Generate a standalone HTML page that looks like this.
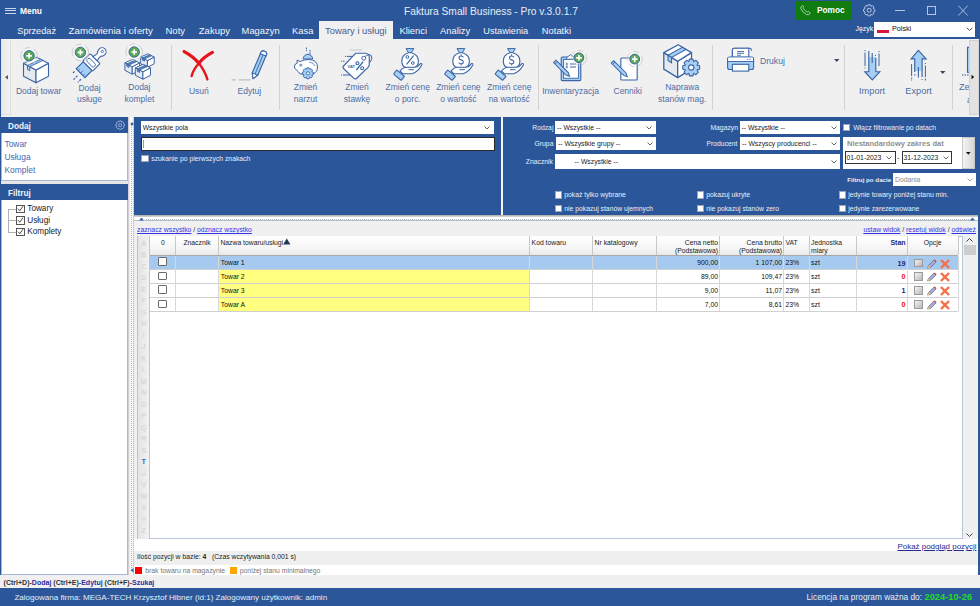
<!DOCTYPE html><html><head><meta charset="utf-8"><style>
*{margin:0;padding:0;box-sizing:border-box}
html,body{width:980px;height:606px;overflow:hidden;background:#2B579A;font-family:"Liberation Sans",sans-serif}
.t{position:absolute;white-space:pre;line-height:1}
.r{position:absolute}
u{text-decoration:underline}
</style></head><body>

<div class="r" style="left:5px;top:7.5px;width:11px;height:1px;background:#C9D5E8;"></div>
<div class="r" style="left:5px;top:10px;width:11px;height:1px;background:#C9D5E8;"></div>
<div class="r" style="left:5px;top:12.5px;width:11px;height:1px;background:#C9D5E8;"></div>
<div class="t " style="left:20px;top:7.00px;font-size:8.4px;color:#fff;font-weight:bold;">Menu</div>
<div class="t " style="left:404px;top:7.00px;font-size:10.24px;color:#E6ECF5;">Faktura Small Business - Pro v.3.0.1.7</div>
<div class="r" style="left:796px;top:1px;width:56px;height:19px;background:#107C10;"></div>
<div class="t " style="left:817px;top:6.00px;font-size:8.3px;color:#fff;font-weight:bold;">Pomoc</div>
<div class="r" style="left:895px;top:10px;width:9.5px;height:1px;background:#B9C7DE;"></div>
<div class="r" style="left:927.3px;top:6.1px;width:9px;height:8.6px;border:1px solid #B9C7DE;"></div>
<div class="r" style="left:319px;top:21px;width:74px;height:18px;background:#F0F0F0;"></div>
<div class="t " style="left:17.3px;top:27.00px;font-size:9.16px;color:#F2F5FA;">Sprzedaż</div>
<div class="t " style="left:68.6px;top:26.00px;font-size:9.72px;color:#F2F5FA;">Zamówienia i oferty</div>
<div class="t " style="left:165.5px;top:26.00px;font-size:9.5px;color:#F2F5FA;">Noty</div>
<div class="t " style="left:198.8px;top:26.00px;font-size:9.5px;color:#F2F5FA;">Zakupy</div>
<div class="t " style="left:241.6px;top:26.00px;font-size:9.4px;color:#F2F5FA;">Magazyn</div>
<div class="t " style="left:292px;top:26.00px;font-size:9.4px;color:#F2F5FA;">Kasa</div>
<div class="t " style="left:399.4px;top:26.00px;font-size:9.4px;color:#F2F5FA;">Klienci</div>
<div class="t " style="left:440px;top:26.00px;font-size:9.4px;color:#F2F5FA;">Analizy</div>
<div class="t " style="left:483.3px;top:27.00px;font-size:9.18px;color:#F2F5FA;">Ustawienia</div>
<div class="t " style="left:541.8px;top:26.00px;font-size:9.4px;color:#F2F5FA;">Notatki</div>
<div class="t " style="left:325px;top:26.00px;font-size:9.42px;color:#44608F;">Towary i usługi</div>
<div class="t " style="left:855.5px;top:26.00px;font-size:6.9px;color:#fff;">Język</div>
<div class="r" style="left:874px;top:22px;width:101px;height:14.5px;background:#fff;"></div>
<div class="r" style="left:877px;top:29.5px;width:12px;height:3.2px;background:#DC143C;"></div>
<div class="t " style="left:892px;top:25.00px;font-size:7.2px;color:#111;">Polski</div>
<div class="r" style="left:1px;top:39px;width:978px;height:78px;background:#F0F0F0;"></div>
<div class="r" style="left:1px;top:40px;width:10px;height:75px;background:linear-gradient(90deg,#E8E8E8,#F2F2F2);border-right:1px solid #DCDCDC;border-bottom:1px solid #E0E0E0;"></div>
<div class="r" style="left:969px;top:40px;width:9px;height:75px;background:#DCDCDC;border:1px solid #CFCFCF;"></div>
<div class="r" style="left:170.5px;top:45px;width:1px;height:65px;background:#D2D2D2;"></div>
<div class="r" style="left:278.5px;top:45px;width:1px;height:65px;background:#D2D2D2;"></div>
<div class="r" style="left:538.3px;top:45px;width:1px;height:65px;background:#D2D2D2;"></div>
<div class="r" style="left:711.7px;top:45px;width:1px;height:65px;background:#D2D2D2;"></div>
<div class="r" style="left:844.4px;top:45px;width:1px;height:65px;background:#D2D2D2;"></div>
<div class="r" style="left:951.5px;top:45px;width:1px;height:65px;background:#D2D2D2;"></div>
<div class="t " style="left:38.6px;top:87.00px;font-size:8.5px;color:#4D6DA3;width:120px;margin-left:-60.0px;text-align:center;">Dodaj towar</div>
<div class="t " style="left:89.5px;top:84.00px;font-size:8.5px;color:#4D6DA3;width:120px;margin-left:-60.0px;text-align:center;">Dodaj</div>
<div class="t " style="left:89.5px;top:95.00px;font-size:8.5px;color:#4D6DA3;width:120px;margin-left:-60.0px;text-align:center;">usługe</div>
<div class="t " style="left:139.4px;top:83.00px;font-size:8.5px;color:#4D6DA3;width:120px;margin-left:-60.0px;text-align:center;">Dodaj</div>
<div class="t " style="left:139.4px;top:95.00px;font-size:8.5px;color:#4D6DA3;width:120px;margin-left:-60.0px;text-align:center;">komplet</div>
<div class="t " style="left:198.8px;top:87.00px;font-size:8.5px;color:#4D6DA3;width:120px;margin-left:-60.0px;text-align:center;">Usuń</div>
<div class="t " style="left:249.4px;top:87.00px;font-size:8.5px;color:#4D6DA3;width:120px;margin-left:-60.0px;text-align:center;">Edytuj</div>
<div class="t " style="left:305.5px;top:83.00px;font-size:8.5px;color:#4D6DA3;width:120px;margin-left:-60.0px;text-align:center;">Zmień</div>
<div class="t " style="left:305.5px;top:95.00px;font-size:8.5px;color:#4D6DA3;width:120px;margin-left:-60.0px;text-align:center;">narzut</div>
<div class="t " style="left:357px;top:83.00px;font-size:8.5px;color:#4D6DA3;width:120px;margin-left:-60.0px;text-align:center;">Zmień</div>
<div class="t " style="left:357px;top:95.00px;font-size:8.5px;color:#4D6DA3;width:120px;margin-left:-60.0px;text-align:center;">stawkę</div>
<div class="t " style="left:407.8px;top:83.00px;font-size:8.5px;color:#4D6DA3;width:120px;margin-left:-60.0px;text-align:center;">Zmień cenę</div>
<div class="t " style="left:407.8px;top:95.00px;font-size:8.5px;color:#4D6DA3;width:120px;margin-left:-60.0px;text-align:center;">o porc.</div>
<div class="t " style="left:458.4px;top:83.00px;font-size:8.5px;color:#4D6DA3;width:120px;margin-left:-60.0px;text-align:center;">Zmień cenę</div>
<div class="t " style="left:458.4px;top:95.00px;font-size:8.5px;color:#4D6DA3;width:120px;margin-left:-60.0px;text-align:center;">o wartość</div>
<div class="t " style="left:509.2px;top:83.00px;font-size:8.5px;color:#4D6DA3;width:120px;margin-left:-60.0px;text-align:center;">Zmień cenę</div>
<div class="t " style="left:509.2px;top:95.00px;font-size:8.5px;color:#4D6DA3;width:120px;margin-left:-60.0px;text-align:center;">na wartość</div>
<div class="t " style="left:570.6px;top:87.00px;font-size:8.5px;color:#4D6DA3;width:120px;margin-left:-60.0px;text-align:center;">Inwentaryzacja</div>
<div class="t " style="left:627.7px;top:87.00px;font-size:8.5px;color:#4D6DA3;width:120px;margin-left:-60.0px;text-align:center;">Cenniki</div>
<div class="t " style="left:682.2px;top:83.00px;font-size:8.5px;color:#4D6DA3;width:120px;margin-left:-60.0px;text-align:center;">Naprawa</div>
<div class="t " style="left:682.2px;top:95.00px;font-size:8.5px;color:#4D6DA3;width:120px;margin-left:-60.0px;text-align:center;">stanów mag.</div>
<div class="t " style="left:760px;top:57.00px;font-size:8.6px;color:#4D6DA3;">Drukuj</div>
<svg class="r" style="left:0;top:0" width="980" height="120"><polygon points="23.5,63.344 36.0,70.0 36.0,82.8 23.5,76.144" fill="#E6E9EE" stroke="#3A64A6" stroke-width="1.1" stroke-linejoin="round"/><polygon points="36.0,70.0 48.5,63.344 48.5,76.144 36.0,82.8" fill="#FFFFFF" stroke="#3A64A6" stroke-width="1.1" stroke-linejoin="round"/><polygon points="23.5,63.344 36.5,57.2 48.5,63.344 36.0,70.0" fill="#FFFFFF" stroke="#3A64A6" stroke-width="1.1" stroke-linejoin="round"/><polygon points="27.5,65.47392 29.75,66.672 42.75,60.528 40.5,59.32992000000001" fill="#A6CFF4" stroke="#3A64A6" stroke-width="0.8800000000000001"/><polygon points="27.5,65.47392 29.75,66.672 29.75,70.768 27.5,69.56992000000001" fill="#A6CFF4" stroke="#3A64A6" stroke-width="0.8800000000000001"/><circle cx="29.1" cy="55.8" r="8.3" fill="none" stroke="#CBCBCB" stroke-width="0.9" stroke-dasharray="9 3 6 4"/><circle cx="29.1" cy="55.8" r="6.700000000000001" fill="rgba(255,255,255,0.55)"/><circle cx="29.1" cy="55.8" r="5.2" fill="#5AA95A" stroke="#2F5E8E" stroke-width="0.9"/><path d="M26.3 55.8H31.900000000000002M29.1 53.0V58.599999999999994" stroke="#fff" stroke-width="1.7"/><g transform="translate(91.2 62.6) rotate(-45)"><path d="M-18 -5.5H-21.5M-19 -0.5H-25M-19 4.5H-23.5" stroke="#3A64A6" stroke-width="1.2" stroke-dasharray="2.2 1.2"/><rect x="-15" y="-6.2" width="10" height="12.4" fill="#A6CFF4" stroke="#3A64A6" stroke-width="1.15"/><path d="M-15 -3.5H-12.5M-15 0H-11.5M-15 3.5H-12.5" stroke="#3A64A6" stroke-width="0.8"/><rect x="-5" y="-7" width="10.5" height="14" rx="1" fill="#FFFFFF" stroke="#3A64A6" stroke-width="1.15"/><rect x="-2.2" y="-5" width="4.2" height="10" rx="1.6" fill="none" stroke="#3A64A6" stroke-width="0.9"/><path d="M5.5 -3 Q9 -2 11 -2.2 Q13 -4 15.4 -4 A4 4 0 1 1 15.4 4 Q13 4 11 2.2 Q9 2 5.5 3Z" fill="#FFFFFF" stroke="#3A64A6" stroke-width="1.1"/><circle cx="15.8" cy="0" r="1.2" fill="none" stroke="#3A64A6" stroke-width="0.9"/></g><circle cx="80.4" cy="52.4" r="8.3" fill="none" stroke="#CBCBCB" stroke-width="0.9" stroke-dasharray="9 3 6 4"/><circle cx="80.4" cy="52.4" r="6.700000000000001" fill="rgba(255,255,255,0.55)"/><circle cx="80.4" cy="52.4" r="5.2" fill="#5AA95A" stroke="#2F5E8E" stroke-width="0.9"/><path d="M77.60000000000001 52.4H83.2M80.4 49.6V55.199999999999996" stroke="#fff" stroke-width="1.7"/><polygon points="140.7,57.04 147.45,60.55 147.45,67.3 140.7,63.79" fill="#E6E9EE" stroke="#3A64A6" stroke-width="1.0" stroke-linejoin="round"/><polygon points="147.45,60.55 154.2,57.04 154.2,63.79 147.45,67.3" fill="#FFFFFF" stroke="#3A64A6" stroke-width="1.0" stroke-linejoin="round"/><polygon points="140.7,57.04 147.72,53.8 154.2,57.04 147.45,60.55" fill="#FFFFFF" stroke="#3A64A6" stroke-width="1.0" stroke-linejoin="round"/><polygon points="142.45499999999998,57.9526 144.48,59.0056 151.5,55.7656 149.475,54.712599999999995" fill="#5A80BC" stroke="#3A64A6" stroke-width="0.8"/><polygon points="142.45499999999998,57.9526 144.48,59.0056 144.48,61.1656 142.45499999999998,60.1126" fill="#5A80BC" stroke="#3A64A6" stroke-width="0.8"/><polygon points="124.9,62.876 132.25,66.75 132.25,74.2 124.9,70.326" fill="#E6E9EE" stroke="#3A64A6" stroke-width="1.0" stroke-linejoin="round"/><polygon points="132.25,66.75 139.6,62.876 139.6,70.326 132.25,74.2" fill="#FFFFFF" stroke="#3A64A6" stroke-width="1.0" stroke-linejoin="round"/><polygon points="124.9,62.876 132.544,59.3 139.6,62.876 132.25,66.75" fill="#FFFFFF" stroke="#3A64A6" stroke-width="1.0" stroke-linejoin="round"/><polygon points="126.811,63.88324 129.016,65.04544 136.66,61.46944 134.455,60.30724" fill="#5A80BC" stroke="#3A64A6" stroke-width="0.8"/><polygon points="126.811,63.88324 129.016,65.04544 129.016,67.42944 126.811,66.26724" fill="#5A80BC" stroke="#3A64A6" stroke-width="0.8"/><polygon points="135.3,67.876 142.9,71.75 142.9,79.2 135.3,75.326" fill="#E6E9EE" stroke="#3A64A6" stroke-width="1.0" stroke-linejoin="round"/><polygon points="142.9,71.75 150.5,67.876 150.5,75.326 142.9,79.2" fill="#FFFFFF" stroke="#3A64A6" stroke-width="1.0" stroke-linejoin="round"/><polygon points="135.3,67.876 143.204,64.3 150.5,67.876 142.9,71.75" fill="#FFFFFF" stroke="#3A64A6" stroke-width="1.0" stroke-linejoin="round"/><polygon points="137.276,68.88324 139.556,70.04544 147.46,66.46943999999999 145.18,65.30724" fill="#5A80BC" stroke="#3A64A6" stroke-width="0.8"/><polygon points="137.276,68.88324 139.556,70.04544 139.556,72.42944 137.276,71.26724" fill="#5A80BC" stroke="#3A64A6" stroke-width="0.8"/><circle cx="134.2" cy="52.0" r="8.3" fill="none" stroke="#CBCBCB" stroke-width="0.9" stroke-dasharray="9 3 6 4"/><circle cx="134.2" cy="52.0" r="6.700000000000001" fill="rgba(255,255,255,0.55)"/><circle cx="134.2" cy="52.0" r="5.2" fill="#5AA95A" stroke="#2F5E8E" stroke-width="0.9"/><path d="M131.39999999999998 52.0H137.0M134.2 49.2V54.8" stroke="#fff" stroke-width="1.7"/><path d="M184.2 51.6 Q193.5 56.5 199 63.5" fill="none" stroke="#E8141C" stroke-width="3.3" stroke-linecap="round"/><path d="M198.6 63 Q204.8 70.5 207.4 79.4" fill="none" stroke="#E8141C" stroke-width="2.4" stroke-linecap="round"/><path d="M212.4 52.4 Q204 56.8 198.8 63.2" fill="none" stroke="#E8141C" stroke-width="3.3" stroke-linecap="round"/><path d="M199.2 63 Q193.2 69.5 191.6 76" fill="none" stroke="#E8141C" stroke-width="2.4" stroke-linecap="round"/><path d="M231.5 79.9H235.8M238.8 79.9H250.8" stroke="#B9C0C8" stroke-width="1.1"/><g transform="translate(258.7 65.3) rotate(23)"><path d="M-3 -13 Q-3 -15.2 0 -15.2 Q3 -15.2 3 -13 V9.5 L0 14.5 L-3 9.5Z" fill="#A6CFF4" stroke="#3A64A6" stroke-width="1.15" stroke-linejoin="round"/><path d="M-3 -13 Q-3 -15.2 0 -15.2 Q3 -15.2 3 -13 V-11.3 H-3Z" fill="#fff" stroke="#3A64A6" stroke-width="1.0"/><path d="M0 -11 V9" stroke="#3A64A6" stroke-width="0.9"/><path d="M-3 9.5 L0 14.5 L3 9.5Z" fill="#fff" stroke="#3A64A6" stroke-width="1.0" stroke-linejoin="round"/></g><path d="M306.4 47.5V51M310 50V56" stroke="#3A64A6" stroke-width="1" stroke-dasharray="1.6 0.8"/><path d="M303.2 59 A4.7 4.7 0 0 1 312.6 59Z" fill="#A6CFF4" stroke="#3A64A6" stroke-width="1"/><path d="M297 60 L300 61.5 Q304 59.5 309 59.5 Q317.5 60 317.5 67 Q317.5 72 313 74 L300 74 Q298 71 296 69.5 Q294.3 69 294.5 66 Q295 63.5 297.3 63 Z" fill="#fff" stroke="#3A64A6" stroke-width="1"/><ellipse cx="300.8" cy="65.2" rx="1.2" ry="0.9" fill="none" stroke="#3A64A6" stroke-width="0.8"/><path d="M309 62 Q314 62.5 315 66" fill="none" stroke="#3A64A6" stroke-width="0.7"/><polygon points="311.75,71.76 313.38,72.15 313.38,74.45 311.75,74.84 311.71,74.93 312.59,76.36 310.96,77.99 309.53,77.11 309.44,77.15 309.05,78.78 306.75,78.78 306.36,77.15 306.27,77.11 304.84,77.99 303.21,76.36 304.09,74.93 304.05,74.84 302.42,74.45 302.42,72.15 304.05,71.76 304.09,71.67 303.21,70.24 304.84,68.61 306.27,69.49 306.36,69.45 306.75,67.82 309.05,67.82 309.44,69.45 309.53,69.49 310.96,68.61 312.59,70.24 311.71,71.67" fill="#A6CFF4" stroke="#3A64A6" stroke-width="0.9" stroke-linejoin="round"/><circle cx="307.9" cy="73.3" r="1.6" fill="#fff" stroke="#3A64A6" stroke-width="0.9"/><path d="M349.5 50H362" stroke="#C0C6CE" stroke-width="0.9"/><path d="M345 56.4H356M341 61.2H344.5M341 75H353.5" stroke="#3A64A6" stroke-width="1" stroke-dasharray="1.2 0.8 20 0"/><path d="M355.8 53.2 H365.5 Q369.3 53.5 369.3 57.5 V64.5 Q369.3 66 368 67.3 L356.5 78.5 Q355 79.5 353.6 78.2 L343.5 68.5 Q342.3 67.2 343.5 66 Z" fill="#fff" stroke="#3A64A6" stroke-width="1.15" stroke-linejoin="round"/><circle cx="363.8" cy="58.2" r="2" fill="none" stroke="#3A64A6" stroke-width="1"/><path d="M365.5 56.2 Q369 53 371.2 55.5 Q373 58.5 370.3 62" fill="none" stroke="#3A64A6" stroke-width="1"/><text x="347.6" y="67.7" font-family="Liberation Sans" font-weight="bold" font-size="4.0" fill="#3A64A6">VAT</text><path d="M363.2 61.6 L356.4 70" stroke="#3A64A6" stroke-width="1.3"/><circle cx="357.4" cy="63.3" r="1.5" fill="none" stroke="#3A64A6" stroke-width="1.1"/><circle cx="362.2" cy="68.3" r="1.5" fill="none" stroke="#3A64A6" stroke-width="1.1"/><path d="M406 48.6 H413.8 L411.2 52.8 H408.6Z" fill="#A6CFF4" stroke="#3A64A6" stroke-width="1" stroke-linejoin="round"/><path d="M408.4 52.8 Q401.8 55 401.8 61 Q401.8 66.5 406 67.5 H414.2 Q418.4 66.5 418.4 61 Q418.4 55 411.4 52.8Z" fill="#fff" stroke="#3A64A6" stroke-width="1.1"/><path d="M413.6 55.6 L406.6 64.4" stroke="#3A64A6" stroke-width="1.2"/><circle cx="407.4" cy="57" r="1.4" fill="none" stroke="#3A64A6" stroke-width="1"/><circle cx="412.8" cy="63" r="1.4" fill="none" stroke="#3A64A6" stroke-width="1"/><path d="M400 71 Q403 67.3 407 67.3 H415 Q418 67 420.5 63.6 Q422.5 63.2 421.8 65 Q418 72 412 73.8 H403Z" fill="#fff" stroke="#3A64A6" stroke-width="1.1" stroke-linejoin="round"/><path d="M408.5 69.7 H414" stroke="#3A64A6" stroke-width="1"/><g transform="translate(399 75.2) rotate(40)"><rect x="-5" y="-2.6" width="10" height="5.2" rx="0.6" fill="#A6CFF4" stroke="#3A64A6" stroke-width="1.1"/></g><path d="M457 48.6 H464.8 L462.2 52.8 H459.6Z" fill="#A6CFF4" stroke="#3A64A6" stroke-width="1" stroke-linejoin="round"/><path d="M459.4 52.8 Q452.8 55 452.8 61 Q452.8 66.5 457 67.5 H465.2 Q469.4 66.5 469.4 61 Q469.4 55 462.4 52.8Z" fill="#fff" stroke="#3A64A6" stroke-width="1.1"/><path d="M463.4 57.3 Q462.8 56 461.1 56 Q459 56 459 57.8 Q459 59.4 461.1 59.9 Q463.3 60.4 463.3 62.1 Q463.3 63.9 461.1 63.9 Q459.3 63.9 458.8 62.6 M461.1 54.6 V56 M461.1 63.9 V65.3" fill="none" stroke="#3A64A6" stroke-width="1.1"/><path d="M451 71 Q454 67.3 458 67.3 H466 Q469 67 471.5 63.6 Q473.5 63.2 472.8 65 Q469 72 463 73.8 H454Z" fill="#fff" stroke="#3A64A6" stroke-width="1.1" stroke-linejoin="round"/><path d="M459.5 69.7 H465" stroke="#3A64A6" stroke-width="1"/><g transform="translate(450 75.2) rotate(40)"><rect x="-5" y="-2.6" width="10" height="5.2" rx="0.6" fill="#A6CFF4" stroke="#3A64A6" stroke-width="1.1"/></g><path d="M507.5 48.6 H515.3 L512.7 52.8 H510.1Z" fill="#A6CFF4" stroke="#3A64A6" stroke-width="1" stroke-linejoin="round"/><path d="M509.9 52.8 Q503.3 55 503.3 61 Q503.3 66.5 507.5 67.5 H515.7 Q519.9 66.5 519.9 61 Q519.9 55 512.9 52.8Z" fill="#fff" stroke="#3A64A6" stroke-width="1.1"/><path d="M513.9 57.3 Q513.3 56 511.6 56 Q509.5 56 509.5 57.8 Q509.5 59.4 511.6 59.9 Q513.8 60.4 513.8 62.1 Q513.8 63.9 511.6 63.9 Q509.8 63.9 509.3 62.6 M511.6 54.6 V56 M511.6 63.9 V65.3" fill="none" stroke="#3A64A6" stroke-width="1.1"/><path d="M501.5 71 Q504.5 67.3 508.5 67.3 H516.5 Q519.5 67 522.0 63.6 Q524.0 63.2 523.3 65 Q519.5 72 513.5 73.8 H504.5Z" fill="#fff" stroke="#3A64A6" stroke-width="1.1" stroke-linejoin="round"/><path d="M510.0 69.7 H515.5" stroke="#3A64A6" stroke-width="1"/><g transform="translate(500.5 75.2) rotate(40)"><rect x="-5" y="-2.6" width="10" height="5.2" rx="0.6" fill="#A6CFF4" stroke="#3A64A6" stroke-width="1.1"/></g><rect x="561.2" y="57" width="19.6" height="23.6" rx="1.2" fill="#A6CFF4" stroke="#3A64A6" stroke-width="1.1"/><rect x="563.6" y="59.4" width="14.8" height="18.8" fill="#fff" stroke="#3A64A6" stroke-width="0.9"/><path d="M566 59.2 Q567 56.2 569 56 Q570 53.6 571.8 55.6 Q574 56 575 59.2Z" fill="#fff" stroke="#3A64A6" stroke-width="0.9"/><path d="M570 64H576M570 67H576" stroke="#3A64A6" stroke-width="1.1"/><path d="M566.8 62.5V68.5M565.6 64H568M565.6 67H568" stroke="#3A64A6" stroke-width="0.7"/><g transform="translate(562.5 69.2) rotate(45)"><path d="M-11 -1.7 H6.5 L10 0 L6.5 1.7 H-11Z" fill="#A6CFF4" stroke="#3A64A6" stroke-width="1"/><path d="M-9 -1.7V1.7" stroke="#3A64A6" stroke-width="0.8"/></g><circle cx="578.9" cy="57.8" r="7.6" fill="none" stroke="#CBCBCB" stroke-width="0.9" stroke-dasharray="9 3 6 4"/><circle cx="578.9" cy="57.8" r="6.0" fill="rgba(255,255,255,0.55)"/><circle cx="578.9" cy="57.8" r="4.9" fill="#5AA95A" stroke="#2F5E8E" stroke-width="0.9"/><path d="M576.1 57.8H581.6999999999999M578.9 55.0V60.599999999999994" stroke="#fff" stroke-width="1.7"/><rect x="620.8" y="58" width="16.4" height="22" rx="1" fill="#fff" stroke="#3A64A6" stroke-width="1.1"/><g transform="translate(620.2 69.6) rotate(45)"><path d="M-11 -1.7 H6.5 L10 0 L6.5 1.7 H-11Z" fill="#A6CFF4" stroke="#3A64A6" stroke-width="1"/><path d="M-9 -1.7V1.7" stroke="#3A64A6" stroke-width="0.8"/></g><circle cx="634.7" cy="59.1" r="7.6" fill="none" stroke="#CBCBCB" stroke-width="0.9" stroke-dasharray="9 3 6 4"/><circle cx="634.7" cy="59.1" r="6.0" fill="rgba(255,255,255,0.55)"/><circle cx="634.7" cy="59.1" r="4.9" fill="#5AA95A" stroke="#2F5E8E" stroke-width="0.9"/><path d="M631.9000000000001 59.1H637.5M634.7 56.300000000000004V61.9" stroke="#fff" stroke-width="1.7"/><polygon points="663.8,52.672 677.65,61.199999999999996 677.65,77.6 663.8,69.072" fill="#E6E9EE" stroke="#3A64A6" stroke-width="1.3" stroke-linejoin="round"/><polygon points="677.65,61.199999999999996 691.5,52.672 691.5,69.072 677.65,77.6" fill="#FFFFFF" stroke="#3A64A6" stroke-width="1.3" stroke-linejoin="round"/><polygon points="663.8,52.672 678.204,44.8 691.5,52.672 677.65,61.199999999999996" fill="#FFFFFF" stroke="#3A64A6" stroke-width="1.3" stroke-linejoin="round"/><polygon points="667.9549999999999,55.230399999999996 671.5559999999999,57.44768 685.9599999999999,49.57568 682.3589999999999,47.358399999999996" fill="#A6CFF4" stroke="#3A64A6" stroke-width="1.04"/><polygon points="667.9549999999999,55.230399999999996 671.5559999999999,57.44768 671.5559999999999,62.695679999999996 667.9549999999999,60.47839999999999" fill="#A6CFF4" stroke="#3A64A6" stroke-width="1.04"/><polygon points="697.11,65.14 699.62,65.73 699.62,69.27 697.11,69.86 697.05,70.01 698.4,72.2 695.9,74.7 693.71,73.35 693.56,73.41 692.97,75.92 689.43,75.92 688.84,73.41 688.69,73.35 686.5,74.7 684.0,72.2 685.35,70.01 685.29,69.86 682.78,69.27 682.78,65.73 685.29,65.14 685.35,64.99 684.0,62.8 686.5,60.3 688.69,61.65 688.84,61.59 689.43,59.08 692.97,59.08 693.56,61.59 693.71,61.65 695.9,60.3 698.4,62.8 697.05,64.99" fill="#A6CFF4" stroke="#3A64A6" stroke-width="1.1" stroke-linejoin="round"/><circle cx="691.2" cy="67.5" r="2.6" fill="#fff" stroke="#3A64A6" stroke-width="1.1"/><path d="M732.4 57.2 V50 Q732.4 48.3 734.2 48.3 H750 Q751.8 48.6 751 50.8" fill="#fff" stroke="#3A64A6" stroke-width="1.1"/><path d="M732.4 57.2 V50 Q732.4 48.3 734.2 48.3 H748.8 V57.2Z" fill="#fff" stroke="#3A64A6" stroke-width="1.1"/><path d="M737 51.5H744M737 53.3H744M737 55.2H741" stroke="#3A64A6" stroke-width="0.9"/><rect x="727.6" y="57" width="26" height="12.5" rx="2" fill="#A6CFF4" stroke="#3A64A6" stroke-width="1.1"/><rect x="728.2" y="57.6" width="24.8" height="3.6" fill="#fff"/><path d="M727.6 61.5H753.6" stroke="#3A64A6" stroke-width="0.9"/><path d="M747 59.4H751" stroke="#3A64A6" stroke-width="0.8" stroke-dasharray="1 0.6"/><rect x="732.4" y="64.3" width="16.4" height="6.8" fill="#fff" stroke="#3A64A6" stroke-width="1.1"/><path d="M868.8 57 V71.7 H864.8 L872.3 79.8 L879.8 71.7 H875.8 V57Z" fill="#A6CFF4"/><path d="M868.8 51 V71.7 H864.8 L872.3 79.8 L879.8 71.7 H875.8 V58" fill="none" stroke="#3A64A6" stroke-width="1.15" stroke-linejoin="miter"/><path d="M865 50V51M865 52.5V66M865 67.5V68.5" stroke="#3A64A6" stroke-width="1"/><path d="M872.2 53V63" stroke="#3A64A6" stroke-width="1.1"/><path d="M875.5 55V56" stroke="#3A64A6" stroke-width="1"/><path d="M879 51V52M879 53.5V66" stroke="#3A64A6" stroke-width="1"/><path d="M914.7 58.9 H911.1 L918.4 50.4 L926.1 58.9 H922.1 V71 H914.7Z" fill="#A6CFF4"/><path d="M914.7 72 V58.9 H911.1 L918.4 50.4 L926.1 58.9 H922.1 V76.9" fill="none" stroke="#3A64A6" stroke-width="1.15"/><path d="M911.6 64V79M911.6 79.5V80.5" stroke="#3A64A6" stroke-width="1" stroke-dasharray="12 1.5 1 0"/><path d="M918.4 67V77.5" stroke="#3A64A6" stroke-width="1.1"/><path d="M914.9 74V75.5M922 79V80" stroke="#3A64A6" stroke-width="1"/><path d="M925.4 63V64M925.4 65.5V77M925.4 78.5V80.5" stroke="#3A64A6" stroke-width="1"/><rect x="967.5" y="47.3" width="8" height="25" fill="#A6CFF4" stroke="#3A64A6" stroke-width="1.1"/><path d="M962 75H969" stroke="#3A64A6" stroke-width="1" stroke-dasharray="1.5 1"/></svg>
<svg class="r" style="left:834px;top:58.5px" width="6" height="4"><path d="M0 0H5.5L2.75 3Z" fill="#3A4A6A"/></svg>
<svg class="r" style="left:940px;top:70.5px" width="6" height="4"><path d="M0 0H5.5L2.75 3Z" fill="#3A4A6A"/></svg>
<svg class="r" style="left:4.5px;top:75px" width="4" height="5"><path d="M3 0V4.5L0 2.25Z" fill="#555"/></svg>
<div class="t " style="left:872.1px;top:87.00px;font-size:9.2px;color:#4D6DA3;width:120px;margin-left:-60.0px;text-align:center;">Import</div>
<div class="t " style="left:918.6px;top:87.00px;font-size:9.2px;color:#4D6DA3;width:120px;margin-left:-60.0px;text-align:center;">Export</div>
<div class="t " style="left:959px;top:83.00px;font-size:9.0px;color:#4D6DA3;">Zes</div>
<div class="t " style="left:967px;top:96.00px;font-size:9.0px;color:#4D6DA3;">a</div>
<div class="r" style="left:969.4px;top:40px;width:9.2px;height:75px;background:#E2E2E2;border:1px solid #D2D2D2;"></div>
<div class="r" style="left:0px;top:117px;width:128px;height:16px;background:#2B579A;"></div>
<div class="t " style="left:8px;top:123.00px;font-size:8.2px;color:#F0F4FA;font-weight:bold;">Dodaj</div>
<div class="r" style="left:1px;top:133px;width:127px;height:48px;background:#fff;border:1px solid #A4B8D8;border-top:none;"></div>
<div class="t " style="left:4.5px;top:140.00px;font-size:8.4px;color:#3F68B2;">Towar</div>
<div class="t " style="left:4.5px;top:153.00px;font-size:8.4px;color:#3F68B2;">Usługa</div>
<div class="t " style="left:4.5px;top:166.00px;font-size:8.4px;color:#3F68B2;">Komplet</div>
<div class="r" style="left:1px;top:181px;width:127px;height:3px;background:#E6E6E6;"></div>
<div class="r" style="left:0px;top:184px;width:128px;height:16px;background:#2B579A;"></div>
<div class="t " style="left:8px;top:190.00px;font-size:8.2px;color:#F0F4FA;font-weight:bold;">Filtruj</div>
<div class="r" style="left:1px;top:200px;width:127px;height:375px;background:#fff;border:1px solid #A4B8D8;border-top:none;"></div>
<div class="r" style="left:8px;top:208.5px;width:1px;height:23px;background:#B0B0B0;"></div>
<div class="r" style="left:8px;top:208.5px;width:8px;height:1px;background:#B0B0B0;"></div>
<div class="r" style="left:16px;top:204.5px;width:8.5px;height:8.5px;background:#fff;border:1px solid #555;"></div>
<div class="t " style="left:27.3px;top:205.00px;font-size:8.2px;color:#1A1A2A;">Towary</div>
<div class="r" style="left:8px;top:220px;width:8px;height:1px;background:#B0B0B0;"></div>
<div class="r" style="left:16px;top:216px;width:8.5px;height:8.5px;background:#fff;border:1px solid #555;"></div>
<div class="t " style="left:27.3px;top:217.00px;font-size:8.2px;color:#1A1A2A;">Usługi</div>
<div class="r" style="left:8px;top:231.5px;width:8px;height:1px;background:#B0B0B0;"></div>
<div class="r" style="left:16px;top:227.5px;width:8.5px;height:8.5px;background:#fff;border:1px solid #555;"></div>
<div class="t " style="left:27.3px;top:228.00px;font-size:8.2px;color:#1A1A2A;">Komplety</div>
<div class="r" style="left:128px;top:117px;width:6px;height:461px;background:linear-gradient(90deg,#C4C4C4 0,#ECECEC 1.5px,#FFFFFF 3px,#F6F6F6 4.5px,#BDBDBD 6px);"></div>
<div class="r" style="left:131px;top:125px;width:1px;height:445px;background:repeating-linear-gradient(#A9B6CC 0 1px,transparent 1px 2px);"></div>
<svg class="r" style="left:129.5px;top:122px" width="4" height="4"><circle cx="2" cy="2" r="1.4" fill="#3A64A6"/></svg>
<svg class="r" style="left:130px;top:568px" width="4" height="5"><path d="M3.5 0V4.5L0.5 2.25Z" fill="#3A64A6"/></svg>
<div class="r" style="left:134px;top:117px;width:367px;height:98px;background:#2B579A;"></div>
<div class="r" style="left:501px;top:117px;width:2px;height:98px;background:#F4F4F4;"></div>
<div class="r" style="left:503px;top:117px;width:477px;height:98px;background:#2B579A;"></div>
<div class="r" style="left:141px;top:121px;width:353px;height:13px;background:#fff;"></div>
<div class="t " style="left:142.7px;top:125.00px;font-size:6.8px;color:#222;">Wszystkie pola</div>
<svg class="r" style="left:484px;top:125.5px" width="6" height="4"><path d="M0.5 0.5 L3 3 L5.5 0.5" fill="none" stroke="#666" stroke-width="1"/></svg>
<div class="r" style="left:141px;top:137px;width:353.5px;height:13.5px;background:#fff;border:1px solid #2A2A2A;"></div>
<div class="r" style="left:142.5px;top:139.5px;width:1.2px;height:8.5px;background:#9A9A9A;"></div>
<div class="r" style="left:141px;top:154.7px;width:7.5px;height:7.5px;background:#fff;border:1px solid #9AA6B8;"></div>
<div class="t " style="left:151.3px;top:156.00px;font-size:6.8px;color:#E8EEF8;">szukanie po pierwszych znakach</div>
<div class="t " style="right:426.6px;top:125.00px;font-size:6.8px;color:#E8EEF8;">Rodzaj</div>
<div class="r" style="left:555px;top:121px;width:101px;height:13px;background:#fff;"></div>
<div class="t " style="left:557px;top:125.00px;font-size:6.8px;color:#222;">-- Wszystkie --</div>
<svg class="r" style="left:646px;top:125.5px" width="6" height="4"><path d="M0.5 0.5 L3 3 L5.5 0.5" fill="none" stroke="#666" stroke-width="1"/></svg>
<div class="t " style="right:426.6px;top:141.00px;font-size:6.8px;color:#E8EEF8;">Grupa</div>
<div class="r" style="left:556px;top:137.3px;width:100px;height:13px;background:#fff;"></div>
<div class="t " style="left:558px;top:141.00px;font-size:6.8px;color:#222;">-- Wszystkie grupy --</div>
<svg class="r" style="left:646.5px;top:141.8px" width="6" height="4"><path d="M0.5 0.5 L3 3 L5.5 0.5" fill="none" stroke="#666" stroke-width="1"/></svg>
<div class="t " style="right:427px;top:159.00px;font-size:6.8px;color:#E8EEF8;">Znacznik</div>
<div class="r" style="left:555px;top:153.6px;width:285px;height:15.8px;background:#fff;"></div>
<div class="t " style="left:574.5px;top:159.00px;font-size:6.8px;color:#222;">-- Wszystkie --</div>
<svg class="r" style="left:831px;top:159.5px" width="6" height="4"><path d="M0.5 0.5 L3 3 L5.5 0.5" fill="none" stroke="#666" stroke-width="1"/></svg>
<div class="t " style="right:242px;top:125.00px;font-size:6.8px;color:#E8EEF8;">Magazyn</div>
<div class="r" style="left:739.5px;top:121px;width:100.5px;height:13px;background:#fff;"></div>
<div class="t " style="left:741.5px;top:125.00px;font-size:6.8px;color:#222;">-- Wszystkie --</div>
<svg class="r" style="left:831px;top:125.5px" width="6" height="4"><path d="M0.5 0.5 L3 3 L5.5 0.5" fill="none" stroke="#666" stroke-width="1"/></svg>
<div class="t " style="right:242.5px;top:141.00px;font-size:6.8px;color:#E8EEF8;">Producent</div>
<div class="r" style="left:739.5px;top:137px;width:100.5px;height:13px;background:#fff;"></div>
<div class="t " style="left:742px;top:141.00px;font-size:6.8px;color:#222;">-- Wszyscy producenci --</div>
<svg class="r" style="left:831px;top:141.8px" width="6" height="4"><path d="M0.5 0.5 L3 3 L5.5 0.5" fill="none" stroke="#666" stroke-width="1"/></svg>
<div class="r" style="left:842.6px;top:123.7px;width:7.5px;height:7.5px;background:#fff;border:1px solid #9AA6B8;"></div>
<div class="t " style="left:853.2px;top:125.00px;font-size:6.8px;color:#E8EEF8;">Włącz filtrowanie po datach</div>
<div class="r" style="left:842.8px;top:137.3px;width:119px;height:32.2px;background:#fff;"></div>
<div class="r" style="left:961.5px;top:137.3px;width:13.6px;height:32.2px;background:linear-gradient(90deg,#F4F4F4,#D6D6D6);border:1px solid #C8C8C8;"></div>
<svg class="r" style="left:966px;top:152px" width="5" height="3"><path d="M0 0H4.6L2.3 2.8Z" fill="#111"/></svg>
<div class="t " style="left:847px;top:140.00px;font-size:7.5px;color:#948F8B;font-weight:bold;">Niestandardowy zakres dat</div>
<div class="r" style="left:845.2px;top:151px;width:50.5px;height:12.7px;background:#fff;border:1px solid #333;"></div>
<div class="t " style="left:846.5px;top:155.00px;font-size:6.8px;color:#222;">01-01-2023</div>
<svg class="r" style="left:885.5px;top:155.5px" width="6" height="4"><path d="M0.5 0.5 L3 3 L5.5 0.5" fill="none" stroke="#666" stroke-width="1"/></svg>
<div class="t " style="left:897px;top:155.00px;font-size:6.8px;color:#222;">-</div>
<div class="r" style="left:902.1px;top:151px;width:50.4px;height:12.7px;background:#fff;border:1px solid #333;"></div>
<div class="t " style="left:903.5px;top:155.00px;font-size:6.8px;color:#222;">31-12-2023</div>
<svg class="r" style="left:943px;top:155.5px" width="6" height="4"><path d="M0.5 0.5 L3 3 L5.5 0.5" fill="none" stroke="#666" stroke-width="1"/></svg>
<div class="t " style="right:88.79999999999995px;top:177.00px;font-size:6.2px;color:#E8EEF8;font-weight:bold;">Filtruj po dacie</div>
<div class="r" style="left:893px;top:173px;width:82.6px;height:13.3px;background:#fff;"></div>
<div class="t " style="left:895px;top:177.00px;font-size:6.8px;color:#8A8A8A;">Dodania</div>
<svg class="r" style="left:966.5px;top:177.8px" width="6" height="4"><path d="M0.5 0.5 L3 3 L5.5 0.5" fill="none" stroke="#AAA" stroke-width="1"/></svg>
<div class="r" style="left:554.6px;top:191px;width:7.5px;height:7.5px;background:#fff;border:1px solid #9AA6B8;"></div>
<div class="t " style="left:564.3000000000001px;top:192.00px;font-size:6.8px;color:#E8EEF8;">pokaż tylko wybrane</div>
<div class="r" style="left:554.6px;top:204.8px;width:7.5px;height:7.5px;background:#fff;border:1px solid #9AA6B8;"></div>
<div class="t " style="left:564.3000000000001px;top:206.00px;font-size:6.8px;color:#E8EEF8;">nie pokazuj stanów ujemnych</div>
<div class="r" style="left:696.5px;top:191px;width:7.5px;height:7.5px;background:#fff;border:1px solid #9AA6B8;"></div>
<div class="t " style="left:706.2px;top:192.00px;font-size:6.8px;color:#E8EEF8;">pokazuj ukryte</div>
<div class="r" style="left:696.5px;top:204.8px;width:7.5px;height:7.5px;background:#fff;border:1px solid #9AA6B8;"></div>
<div class="t " style="left:706.2px;top:206.00px;font-size:6.8px;color:#E8EEF8;">nie pokazuj stanów zero</div>
<div class="r" style="left:838.6px;top:191px;width:7.5px;height:7.5px;background:#fff;border:1px solid #9AA6B8;"></div>
<div class="t " style="left:848.3000000000001px;top:192.00px;font-size:6.8px;color:#E8EEF8;">jedynie towary poniżej stanu min.</div>
<div class="r" style="left:838.6px;top:204.8px;width:7.5px;height:7.5px;background:#fff;border:1px solid #9AA6B8;"></div>
<div class="t " style="left:848.3000000000001px;top:206.00px;font-size:6.8px;color:#E8EEF8;">jedynie zarezerwowane</div>
<div class="r" style="left:134px;top:215px;width:844px;height:6px;background:linear-gradient(#A8A8A8 0,#D4D4D4 1.8px,#FFFFFF 2.2px,#FFFFFF 5px,#B4B4B4 5.2px,#C8C8C8 6px);"></div>
<div class="r" style="left:146px;top:218.5px;width:826px;height:1.2px;background:repeating-linear-gradient(90deg,#B4BFD2 0 1px,transparent 1px 2px);"></div>
<svg class="r" style="left:138.5px;top:217px" width="6" height="4"><path d="M0 3.5H5L2.5 0.5Z" fill="#3A64A6"/></svg>
<svg class="r" style="left:969.5px;top:217px" width="6" height="4"><path d="M0 3.5H5L2.5 0.5Z" fill="#3A64A6"/></svg>
<div class="r" style="left:134px;top:221px;width:844px;height:367px;background:#F0F0F0;"></div>
<div class="t " style="left:137px;top:227.00px;font-size:6.8px;color:#3535E8;"><u>zaznacz wszystko</u> <span style="color:#333">/</span> <u>odznacz wszystko</u></div>
<div class="t " style="right:4px;top:227.00px;font-size:6.8px;color:#3535E8;"><u>ustaw widok</u> <span style="color:#333">/</span> <u>resetuj widok</u> <span style="color:#333">/</span> <u>odśwież</u></div>
<div class="r" style="left:137px;top:235.5px;width:826px;height:303.5px;background:#fff;border:1px solid #B7C6DC;"></div>
<div class="r" style="left:137.5px;top:236px;width:12.5px;height:302.5px;background:linear-gradient(90deg,#E4E4E4,#F2F2F2);border-right:1px solid #BCC8DA;"></div>
<div class="t " style="left:143.8px;top:240.00px;font-size:7.2px;color:#CFCFCF;width:12px;margin-left:-6.0px;text-align:center;">A</div>
<div class="t " style="left:143.8px;top:251.00px;font-size:7.2px;color:#CFCFCF;width:12px;margin-left:-6.0px;text-align:center;">B</div>
<div class="t " style="left:143.8px;top:263.00px;font-size:7.2px;color:#CFCFCF;width:12px;margin-left:-6.0px;text-align:center;">C</div>
<div class="t " style="left:143.8px;top:274.00px;font-size:7.2px;color:#CFCFCF;width:12px;margin-left:-6.0px;text-align:center;">D</div>
<div class="t " style="left:143.8px;top:286.00px;font-size:7.2px;color:#CFCFCF;width:12px;margin-left:-6.0px;text-align:center;">E</div>
<div class="t " style="left:143.8px;top:297.00px;font-size:7.2px;color:#CFCFCF;width:12px;margin-left:-6.0px;text-align:center;">F</div>
<div class="t " style="left:143.8px;top:309.00px;font-size:7.2px;color:#CFCFCF;width:12px;margin-left:-6.0px;text-align:center;">G</div>
<div class="t " style="left:143.8px;top:320.00px;font-size:7.2px;color:#CFCFCF;width:12px;margin-left:-6.0px;text-align:center;">H</div>
<div class="t " style="left:143.8px;top:332.00px;font-size:7.2px;color:#CFCFCF;width:12px;margin-left:-6.0px;text-align:center;">I</div>
<div class="t " style="left:143.8px;top:343.00px;font-size:7.2px;color:#CFCFCF;width:12px;margin-left:-6.0px;text-align:center;">J</div>
<div class="t " style="left:143.8px;top:355.00px;font-size:7.2px;color:#CFCFCF;width:12px;margin-left:-6.0px;text-align:center;">K</div>
<div class="t " style="left:143.8px;top:366.00px;font-size:7.2px;color:#CFCFCF;width:12px;margin-left:-6.0px;text-align:center;">L</div>
<div class="t " style="left:143.8px;top:378.00px;font-size:7.2px;color:#CFCFCF;width:12px;margin-left:-6.0px;text-align:center;">M</div>
<div class="t " style="left:143.8px;top:389.00px;font-size:7.2px;color:#CFCFCF;width:12px;margin-left:-6.0px;text-align:center;">N</div>
<div class="t " style="left:143.8px;top:401.00px;font-size:7.2px;color:#CFCFCF;width:12px;margin-left:-6.0px;text-align:center;">O</div>
<div class="t " style="left:143.8px;top:412.00px;font-size:7.2px;color:#CFCFCF;width:12px;margin-left:-6.0px;text-align:center;">P</div>
<div class="t " style="left:143.8px;top:424.00px;font-size:7.2px;color:#CFCFCF;width:12px;margin-left:-6.0px;text-align:center;">Q</div>
<div class="t " style="left:143.8px;top:435.00px;font-size:7.2px;color:#CFCFCF;width:12px;margin-left:-6.0px;text-align:center;">R</div>
<div class="t " style="left:143.8px;top:447.00px;font-size:7.2px;color:#CFCFCF;width:12px;margin-left:-6.0px;text-align:center;">S</div>
<div class="t " style="left:143.8px;top:458.00px;font-size:7.2px;color:#2F6FD6;font-weight:bold;width:12px;margin-left:-6.0px;text-align:center;">T</div>
<div class="t " style="left:143.8px;top:470.00px;font-size:7.2px;color:#CFCFCF;width:12px;margin-left:-6.0px;text-align:center;">U</div>
<div class="t " style="left:143.8px;top:481.00px;font-size:7.2px;color:#CFCFCF;width:12px;margin-left:-6.0px;text-align:center;">V</div>
<div class="t " style="left:143.8px;top:493.00px;font-size:7.2px;color:#CFCFCF;width:12px;margin-left:-6.0px;text-align:center;">W</div>
<div class="t " style="left:143.8px;top:504.00px;font-size:7.2px;color:#CFCFCF;width:12px;margin-left:-6.0px;text-align:center;">X</div>
<div class="t " style="left:143.8px;top:516.00px;font-size:7.2px;color:#CFCFCF;width:12px;margin-left:-6.0px;text-align:center;">Y</div>
<div class="t " style="left:143.8px;top:527.00px;font-size:7.2px;color:#CFCFCF;width:12px;margin-left:-6.0px;text-align:center;">Z</div>
<div class="r" style="left:150px;top:235.8px;width:808.3px;height:20.2px;background:linear-gradient(#FFFFFF,#F6F6F6 60%,#EAEAEA);border-bottom:1px solid #A8A8A8;"></div>
<div class="r" style="left:175.0px;top:236px;width:1px;height:19px;background:#C8C8C8;"></div>
<div class="r" style="left:218.1px;top:236px;width:1px;height:19px;background:#C8C8C8;"></div>
<div class="r" style="left:528.9px;top:236px;width:1px;height:19px;background:#C8C8C8;"></div>
<div class="r" style="left:592.3px;top:236px;width:1px;height:19px;background:#C8C8C8;"></div>
<div class="r" style="left:656.1px;top:236px;width:1px;height:19px;background:#C8C8C8;"></div>
<div class="r" style="left:718.9px;top:236px;width:1px;height:19px;background:#C8C8C8;"></div>
<div class="r" style="left:783.0px;top:236px;width:1px;height:19px;background:#C8C8C8;"></div>
<div class="r" style="left:809.0px;top:236px;width:1px;height:19px;background:#C8C8C8;"></div>
<div class="r" style="left:855.9px;top:236px;width:1px;height:19px;background:#C8C8C8;"></div>
<div class="r" style="left:907.0px;top:236px;width:1px;height:19px;background:#C8C8C8;"></div>
<div class="r" style="left:957.8px;top:236px;width:1px;height:19px;background:#C8C8C8;"></div>
<div class="t " style="left:163px;top:240.00px;font-size:6.8px;color:#222;width:20px;margin-left:-10.0px;text-align:center;">0</div>
<div class="t " style="left:197px;top:240.00px;font-size:6.8px;color:#222;width:40px;margin-left:-20.0px;text-align:center;">Znacznik</div>
<div class="t " style="left:220.4px;top:240.00px;font-size:6.8px;color:#222;">Nazwa towaru/usługi</div>
<svg class="r" style="left:283.2px;top:237.6px" width="8" height="7"><path d="M0.2 6.4H7.4L3.8 0.4Z" fill="#1F3556"/></svg>
<div class="t " style="left:531.6px;top:240.00px;font-size:6.8px;color:#222;">Kod towaru</div>
<div class="t " style="left:594.6px;top:240.00px;font-size:6.8px;color:#222;">Nr katalogowy</div>
<div class="t " style="right:262px;top:240.00px;font-size:6.8px;color:#222;">Cena netto</div>
<div class="t " style="right:262px;top:248.00px;font-size:6.8px;color:#222;">(Podstawowa)</div>
<div class="t " style="right:198px;top:240.00px;font-size:6.8px;color:#222;">Cena brutto</div>
<div class="t " style="right:198px;top:248.00px;font-size:6.8px;color:#222;">(Podstawowa)</div>
<div class="t " style="left:785.4px;top:240.00px;font-size:6.8px;color:#222;">VAT</div>
<div class="t " style="left:811.1px;top:240.00px;font-size:6.8px;color:#222;">Jednostka</div>
<div class="t " style="left:811.1px;top:248.00px;font-size:6.8px;color:#222;">miary</div>
<div class="t " style="right:74.39999999999998px;top:239.00px;font-size:7.0px;color:#1C2A7A;font-weight:bold;">Stan</div>
<div class="t " style="left:932.6px;top:240.00px;font-size:6.8px;color:#222;width:40px;margin-left:-20.0px;text-align:center;">Opcje</div>
<div class="r" style="left:150px;top:256px;width:808.3px;height:13.399999999999977px;background:#A6C9EF;"></div>
<div class="r" style="left:158.2px;top:257.4px;width:8.6px;height:8.4px;background:#fff;border:1.3px solid #6A6A6A;border-radius:1px;"></div>
<div class="t " style="left:220.8px;top:260.00px;font-size:6.8px;color:#111;">Towar 1</div>
<div class="t " style="right:262px;top:260.00px;font-size:6.8px;color:#111;">900,00</div>
<div class="t " style="right:198px;top:260.00px;font-size:6.8px;color:#111;">1 107,00</div>
<div class="t " style="left:785.4px;top:260.00px;font-size:6.8px;color:#111;">23%</div>
<div class="t " style="left:811.1px;top:260.00px;font-size:6.8px;color:#111;">szt</div>
<div class="t " style="right:74.39999999999998px;top:260.00px;font-size:7.2px;color:#1C2A7A;font-weight:bold;">19</div>
<div class="r" style="left:914.3px;top:259px;width:8.4px;height:8.4px;background:linear-gradient(135deg,#F4F4F4,#B8B8B8);border:1px solid #9A9A9A;"></div>
<svg class="r" style="left:926px;top:258.5px" width="11" height="10"><path d="M1.5 9 L2.5 6.5 L8 1 L10 3 L4.5 8.5 Z" fill="#A9A8E0" stroke="#555" stroke-width="0.6"/><path d="M8 1 L10 3 L10.6 2.2 L8.8 0.4Z" fill="#E03A20"/><path d="M1.5 9 L2.5 6.5 L4.5 8.5Z" fill="#E8C080"/></svg>
<svg class="r" style="left:939.5px;top:258.5px" width="10" height="10"><path d="M1.6 1.6 L8.4 8.4 M8.4 1.6 L1.6 8.4" stroke="#F2734F" stroke-width="2.3" stroke-linecap="round"/></svg>
<div class="r" style="left:218.6px;top:269.4px;width:310.8px;height:13.900000000000034px;background:#FFFF80;"></div>
<div class="r" style="left:158.2px;top:271.5px;width:8.6px;height:8.4px;background:#fff;border:1.3px solid #6A6A6A;border-radius:1px;"></div>
<div class="t " style="left:220.8px;top:274.00px;font-size:6.8px;color:#111;">Towar 2</div>
<div class="t " style="right:262px;top:274.00px;font-size:6.8px;color:#111;">89,00</div>
<div class="t " style="right:198px;top:274.00px;font-size:6.8px;color:#111;">109,47</div>
<div class="t " style="left:785.4px;top:274.00px;font-size:6.8px;color:#111;">23%</div>
<div class="t " style="left:811.1px;top:274.00px;font-size:6.8px;color:#111;">szt</div>
<div class="t " style="right:74.39999999999998px;top:273.00px;font-size:7.2px;color:#F01010;font-weight:bold;">0</div>
<div class="r" style="left:914.3px;top:272.4px;width:8.4px;height:8.4px;background:linear-gradient(135deg,#F4F4F4,#B8B8B8);border:1px solid #9A9A9A;"></div>
<svg class="r" style="left:926px;top:271.9px" width="11" height="10"><path d="M1.5 9 L2.5 6.5 L8 1 L10 3 L4.5 8.5 Z" fill="#A9A8E0" stroke="#555" stroke-width="0.6"/><path d="M8 1 L10 3 L10.6 2.2 L8.8 0.4Z" fill="#E03A20"/><path d="M1.5 9 L2.5 6.5 L4.5 8.5Z" fill="#E8C080"/></svg>
<svg class="r" style="left:939.5px;top:271.9px" width="10" height="10"><path d="M1.6 1.6 L8.4 8.4 M8.4 1.6 L1.6 8.4" stroke="#F2734F" stroke-width="2.3" stroke-linecap="round"/></svg>
<div class="r" style="left:218.6px;top:283.3px;width:310.8px;height:14.099999999999966px;background:#FFFF80;"></div>
<div class="r" style="left:158.2px;top:285.40000000000003px;width:8.6px;height:8.4px;background:#fff;border:1.3px solid #6A6A6A;border-radius:1px;"></div>
<div class="t " style="left:220.8px;top:288.00px;font-size:6.8px;color:#111;">Towar 3</div>
<div class="t " style="right:262px;top:288.00px;font-size:6.8px;color:#111;">9,00</div>
<div class="t " style="right:198px;top:288.00px;font-size:6.8px;color:#111;">11,07</div>
<div class="t " style="left:785.4px;top:288.00px;font-size:6.8px;color:#111;">23%</div>
<div class="t " style="left:811.1px;top:288.00px;font-size:6.8px;color:#111;">szt</div>
<div class="t " style="right:74.39999999999998px;top:287.00px;font-size:7.2px;color:#1C2A7A;font-weight:bold;">1</div>
<div class="r" style="left:914.3px;top:286.3px;width:8.4px;height:8.4px;background:linear-gradient(135deg,#F4F4F4,#B8B8B8);border:1px solid #9A9A9A;"></div>
<svg class="r" style="left:926px;top:285.8px" width="11" height="10"><path d="M1.5 9 L2.5 6.5 L8 1 L10 3 L4.5 8.5 Z" fill="#A9A8E0" stroke="#555" stroke-width="0.6"/><path d="M8 1 L10 3 L10.6 2.2 L8.8 0.4Z" fill="#E03A20"/><path d="M1.5 9 L2.5 6.5 L4.5 8.5Z" fill="#E8C080"/></svg>
<svg class="r" style="left:939.5px;top:285.8px" width="10" height="10"><path d="M1.6 1.6 L8.4 8.4 M8.4 1.6 L1.6 8.4" stroke="#F2734F" stroke-width="2.3" stroke-linecap="round"/></svg>
<div class="r" style="left:218.6px;top:297.4px;width:310.8px;height:13.900000000000034px;background:#FFFF80;"></div>
<div class="r" style="left:158.2px;top:299.5px;width:8.6px;height:8.4px;background:#fff;border:1.3px solid #6A6A6A;border-radius:1px;"></div>
<div class="t " style="left:220.8px;top:302.00px;font-size:6.8px;color:#111;">Towar A</div>
<div class="t " style="right:262px;top:302.00px;font-size:6.8px;color:#111;">7,00</div>
<div class="t " style="right:198px;top:302.00px;font-size:6.8px;color:#111;">8,61</div>
<div class="t " style="left:785.4px;top:302.00px;font-size:6.8px;color:#111;">23%</div>
<div class="t " style="left:811.1px;top:302.00px;font-size:6.8px;color:#111;">szt</div>
<div class="t " style="right:74.39999999999998px;top:301.00px;font-size:7.2px;color:#F01010;font-weight:bold;">0</div>
<div class="r" style="left:914.3px;top:300.4px;width:8.4px;height:8.4px;background:linear-gradient(135deg,#F4F4F4,#B8B8B8);border:1px solid #9A9A9A;"></div>
<svg class="r" style="left:926px;top:299.9px" width="11" height="10"><path d="M1.5 9 L2.5 6.5 L8 1 L10 3 L4.5 8.5 Z" fill="#A9A8E0" stroke="#555" stroke-width="0.6"/><path d="M8 1 L10 3 L10.6 2.2 L8.8 0.4Z" fill="#E03A20"/><path d="M1.5 9 L2.5 6.5 L4.5 8.5Z" fill="#E8C080"/></svg>
<svg class="r" style="left:939.5px;top:299.9px" width="10" height="10"><path d="M1.6 1.6 L8.4 8.4 M8.4 1.6 L1.6 8.4" stroke="#F2734F" stroke-width="2.3" stroke-linecap="round"/></svg>
<div class="r" style="left:150px;top:268.9px;width:808.3px;height:1px;background:#D0D0D0;"></div>
<div class="r" style="left:175.0px;top:256px;width:1px;height:13.399999999999977px;background:#D8D8D8;"></div>
<div class="r" style="left:218.1px;top:256px;width:1px;height:13.399999999999977px;background:#D8D8D8;"></div>
<div class="r" style="left:528.9px;top:256px;width:1px;height:13.399999999999977px;background:#D8D8D8;"></div>
<div class="r" style="left:592.3px;top:256px;width:1px;height:13.399999999999977px;background:#D8D8D8;"></div>
<div class="r" style="left:656.1px;top:256px;width:1px;height:13.399999999999977px;background:#D8D8D8;"></div>
<div class="r" style="left:718.9px;top:256px;width:1px;height:13.399999999999977px;background:#D8D8D8;"></div>
<div class="r" style="left:783.0px;top:256px;width:1px;height:13.399999999999977px;background:#D8D8D8;"></div>
<div class="r" style="left:809.0px;top:256px;width:1px;height:13.399999999999977px;background:#D8D8D8;"></div>
<div class="r" style="left:855.9px;top:256px;width:1px;height:13.399999999999977px;background:#D8D8D8;"></div>
<div class="r" style="left:907.0px;top:256px;width:1px;height:13.399999999999977px;background:#D8D8D8;"></div>
<div class="r" style="left:957.8px;top:256px;width:1px;height:13.399999999999977px;background:#D8D8D8;"></div>
<div class="r" style="left:150px;top:282.8px;width:808.3px;height:1px;background:#D0D0D0;"></div>
<div class="r" style="left:175.0px;top:269.4px;width:1px;height:13.900000000000034px;background:#D8D8D8;"></div>
<div class="r" style="left:218.1px;top:269.4px;width:1px;height:13.900000000000034px;background:#D8D8D8;"></div>
<div class="r" style="left:528.9px;top:269.4px;width:1px;height:13.900000000000034px;background:#D8D8D8;"></div>
<div class="r" style="left:592.3px;top:269.4px;width:1px;height:13.900000000000034px;background:#D8D8D8;"></div>
<div class="r" style="left:656.1px;top:269.4px;width:1px;height:13.900000000000034px;background:#D8D8D8;"></div>
<div class="r" style="left:718.9px;top:269.4px;width:1px;height:13.900000000000034px;background:#D8D8D8;"></div>
<div class="r" style="left:783.0px;top:269.4px;width:1px;height:13.900000000000034px;background:#D8D8D8;"></div>
<div class="r" style="left:809.0px;top:269.4px;width:1px;height:13.900000000000034px;background:#D8D8D8;"></div>
<div class="r" style="left:855.9px;top:269.4px;width:1px;height:13.900000000000034px;background:#D8D8D8;"></div>
<div class="r" style="left:907.0px;top:269.4px;width:1px;height:13.900000000000034px;background:#D8D8D8;"></div>
<div class="r" style="left:957.8px;top:269.4px;width:1px;height:13.900000000000034px;background:#D8D8D8;"></div>
<div class="r" style="left:150px;top:296.9px;width:808.3px;height:1px;background:#D0D0D0;"></div>
<div class="r" style="left:175.0px;top:283.3px;width:1px;height:14.099999999999966px;background:#D8D8D8;"></div>
<div class="r" style="left:218.1px;top:283.3px;width:1px;height:14.099999999999966px;background:#D8D8D8;"></div>
<div class="r" style="left:528.9px;top:283.3px;width:1px;height:14.099999999999966px;background:#D8D8D8;"></div>
<div class="r" style="left:592.3px;top:283.3px;width:1px;height:14.099999999999966px;background:#D8D8D8;"></div>
<div class="r" style="left:656.1px;top:283.3px;width:1px;height:14.099999999999966px;background:#D8D8D8;"></div>
<div class="r" style="left:718.9px;top:283.3px;width:1px;height:14.099999999999966px;background:#D8D8D8;"></div>
<div class="r" style="left:783.0px;top:283.3px;width:1px;height:14.099999999999966px;background:#D8D8D8;"></div>
<div class="r" style="left:809.0px;top:283.3px;width:1px;height:14.099999999999966px;background:#D8D8D8;"></div>
<div class="r" style="left:855.9px;top:283.3px;width:1px;height:14.099999999999966px;background:#D8D8D8;"></div>
<div class="r" style="left:907.0px;top:283.3px;width:1px;height:14.099999999999966px;background:#D8D8D8;"></div>
<div class="r" style="left:957.8px;top:283.3px;width:1px;height:14.099999999999966px;background:#D8D8D8;"></div>
<div class="r" style="left:150px;top:310.8px;width:808.3px;height:1px;background:#D0D0D0;"></div>
<div class="r" style="left:175.0px;top:297.4px;width:1px;height:13.900000000000034px;background:#D8D8D8;"></div>
<div class="r" style="left:218.1px;top:297.4px;width:1px;height:13.900000000000034px;background:#D8D8D8;"></div>
<div class="r" style="left:528.9px;top:297.4px;width:1px;height:13.900000000000034px;background:#D8D8D8;"></div>
<div class="r" style="left:592.3px;top:297.4px;width:1px;height:13.900000000000034px;background:#D8D8D8;"></div>
<div class="r" style="left:656.1px;top:297.4px;width:1px;height:13.900000000000034px;background:#D8D8D8;"></div>
<div class="r" style="left:718.9px;top:297.4px;width:1px;height:13.900000000000034px;background:#D8D8D8;"></div>
<div class="r" style="left:783.0px;top:297.4px;width:1px;height:13.900000000000034px;background:#D8D8D8;"></div>
<div class="r" style="left:809.0px;top:297.4px;width:1px;height:13.900000000000034px;background:#D8D8D8;"></div>
<div class="r" style="left:855.9px;top:297.4px;width:1px;height:13.900000000000034px;background:#D8D8D8;"></div>
<div class="r" style="left:907.0px;top:297.4px;width:1px;height:13.900000000000034px;background:#D8D8D8;"></div>
<div class="r" style="left:957.8px;top:297.4px;width:1px;height:13.900000000000034px;background:#D8D8D8;"></div>
<div class="r" style="left:963px;top:235.5px;width:15px;height:304px;background:#F0F0F0;"></div>
<svg class="r" style="left:966.0px;top:238.35px" width="7.0" height="4.5"><path d="M0.5 3.5 L3.5 0.5 L6.5 3.5" fill="none" stroke="#444" stroke-width="1"/></svg>
<div class="r" style="left:964px;top:244.8px;width:11.6px;height:10.4px;background:#CDCDCD;"></div>
<svg class="r" style="left:966.0px;top:532.75px" width="7.0" height="4.5"><path d="M0.5 0.5 L3.5 3.5 L6.5 0.5" fill="none" stroke="#444" stroke-width="1"/></svg>
<div class="r" style="left:134px;top:539px;width:844px;height:12px;background:#fff;"></div>
<div class="r" style="left:134px;top:551px;width:844px;height:13.5px;background:#EFEFEF;"></div>
<div class="t " style="left:137.1px;top:554.00px;font-size:6.8px;color:#222;">Ilość pozycji w bazie: <b>4</b>   (Czas wczytywania 0,001 s)</div>
<div class="r" style="left:134px;top:564.5px;width:844px;height:10.5px;background:#fff;"></div>
<div class="t " style="right:3.5px;top:543.00px;font-size:7.94px;color:#2A2A90;"><u>Pokaż podgląd pozycji</u></div>
<div class="r" style="left:134.5px;top:567.2px;width:7.7px;height:7.2px;background:#FF0000;"></div>
<div class="t " style="left:145.3px;top:568.00px;font-size:6.8px;color:#767676;">brak towaru na magazynie</div>
<div class="r" style="left:229.6px;top:567.2px;width:7.5px;height:7.2px;background:#FFA500;"></div>
<div class="t " style="left:239.8px;top:568.00px;font-size:6.8px;color:#767676;">poniżej stanu minimalnego</div>
<div class="r" style="left:0px;top:575px;width:980px;height:13px;background:#F0F0F0;"></div>
<div class="r" style="left:0px;top:588px;width:980px;height:18px;background:#2B579A;"></div>
<div class="t " style="left:3.6px;top:579.00px;font-size:7.02px;color:#333;font-weight:bold;">(Ctrl+D)-<span style="color:#2E2E9E">Dodaj</span> (Ctrl+E)-<span style="color:#2E2E9E">Edytuj</span> (Ctrl+F)-<span style="color:#2E2E9E">Szukaj</span></div>
<div class="t " style="left:14.4px;top:594.00px;font-size:8.07px;color:#E6ECF5;">Zalogowana firma: MEGA-TECH Krzysztof Hibner (id:1) Zalogowany użytkownik: admin</div>
<div class="t " style="left:806.5px;top:593.00px;font-size:8.32px;color:#E6ECF5;">Licencja na program ważna do: </div>
<div class="t " style="left:924.5px;top:593.00px;font-size:9.3px;color:#22DD22;font-weight:bold;">2024-10-26</div>
<svg class="r" style="left:0;top:0" width="980" height="240"><path d="M802.5 5.6 Q800.3 6.5 800.8 8.8 Q802.5 12.5 806.5 14.5 Q808.8 15.3 810.4 13.4 L808.3 11.3 Q807.2 12.3 806.3 11.6 Q804.3 10.3 803.2 8.2 Q802.7 7.1 803.8 6.6Z" fill="none" stroke="#BFE0BF" stroke-width="0.8" stroke-linejoin="round"/><polygon points="873.33,8.66 874.81,9.3 874.81,11.3 873.33,11.94 873.28,12.07 873.87,13.56 872.46,14.97 870.97,14.38 870.84,14.43 870.2,15.91 868.2,15.91 867.56,14.43 867.43,14.38 865.94,14.97 864.53,13.56 865.12,12.07 865.07,11.94 863.59,11.3 863.59,9.3 865.07,8.66 865.12,8.53 864.53,7.04 865.94,5.63 867.43,6.22 867.56,6.17 868.2,4.69 870.2,4.69 870.84,6.17 870.97,6.22 872.46,5.63 873.87,7.04 873.28,8.53" fill="none" stroke="#C8D4E8" stroke-width="0.9" stroke-linejoin="round"/><circle cx="869.2" cy="10.3" r="1.9949999999999999" fill="none" stroke="#C8D4E8" stroke-width="0.9"/><path d="M958.3 5.6 L967.8 15.6 M967.8 5.6 L958.3 15.6" stroke="#B9C7DE" stroke-width="0.9"/><path d="M966.8 27.8 L969.6 30.4 L972.4 27.8" fill="none" stroke="#333" stroke-width="0.9"/><polygon points="123.39,123.94 124.53,124.43 124.53,125.97 123.39,126.46 123.35,126.56 123.81,127.72 122.72,128.81 121.56,128.35 121.46,128.39 120.97,129.53 119.43,129.53 118.94,128.39 118.84,128.35 117.68,128.81 116.59,127.72 117.05,126.56 117.01,126.46 115.87,125.97 115.87,124.43 117.01,123.94 117.05,123.84 116.59,122.68 117.68,121.59 118.84,122.05 118.94,122.01 119.43,120.87 120.97,120.87 121.46,122.01 121.56,122.05 122.72,121.59 123.81,122.68 123.35,123.84" fill="none" stroke="#AFC2DE" stroke-width="0.8" stroke-linejoin="round"/><circle cx="120.2" cy="125.2" r="1.54" fill="none" stroke="#AFC2DE" stroke-width="0.8"/><path d="M18 208.7 L19.8 210.7 L23 206.2" fill="none" stroke="#333" stroke-width="0.9"/><path d="M18 220.2 L19.8 222.2 L23 217.7" fill="none" stroke="#333" stroke-width="0.9"/><path d="M18 231.7 L19.8 233.7 L23 229.2" fill="none" stroke="#333" stroke-width="0.9"/><path d="M971.5 74.8 V79.2 L974.2 77Z" fill="#111"/></svg>
</body></html>
